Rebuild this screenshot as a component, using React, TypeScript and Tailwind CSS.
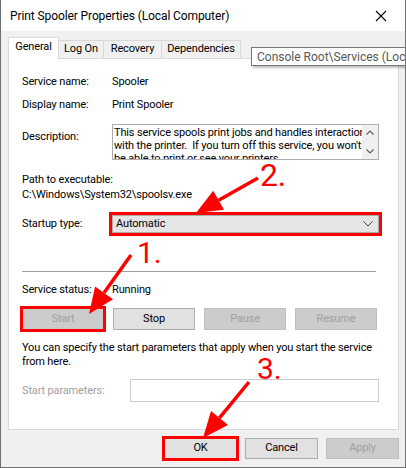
import React from "react";

type Pt = [number, number];

function arrowHead(tail: Pt, tip: Pt, len: number, half: number) {
  const dx = tip[0] - tail[0];
  const dy = tip[1] - tail[1];
  const d = Math.hypot(dx, dy);
  const ux = dx / d;
  const uy = dy / d;
  const bx = tip[0] - ux * len;
  const by = tip[1] - uy * len;
  const nx = -uy * half;
  const ny = ux * half;
  return {
    base: [bx, by] as Pt,
    points: `${tip[0]},${tip[1]} ${bx + nx},${by + ny} ${bx - nx},${by - ny}`,
  };
}

function Arrow({ tail, tip }: { tail: Pt; tip: Pt }) {
  const head = arrowHead(tail, tip, 26, 11);
  return (
    <g>
      <line
        x1={tail[0]}
        y1={tail[1]}
        x2={head.base[0]}
        y2={head.base[1]}
        stroke="#ff0000"
        strokeWidth={3.5}
      />
      <polygon points={head.points} fill="#ff0000" />
    </g>
  );
}

function WinButton({
  label,
  disabled,
  highlight,
  className = "",
}: {
  label: string;
  disabled?: boolean;
  highlight?: boolean;
  className?: string;
}) {
  return (
    <div
      className={`flex items-center justify-center border ${
        disabled
          ? "bg-[#cccccc] border-[#bfbfbf] text-[#a0a0a0]"
          : "bg-[#e1e1e1] border-[#adadad] text-black"
      } ${highlight ? "outline-[3px] outline-[#ff0000] outline-solid outline-offset-[-1px]" : ""} ${className}`}
    >
      {label}
    </div>
  );
}

export default function App() {
  return (
    <div className="relative w-[406px] h-[468px] overflow-hidden bg-[#f0f0f0] border-x border-b border-[#707070] font-['Roboto',sans-serif] text-[11px] tracking-[-0.15px] text-black">
      {/* Title bar */}
      <div className="flex items-center justify-between h-[31px] bg-white pl-[9px] pr-[18px]">
        <span className="text-[12px] tracking-[-0.1px] leading-none text-black">
          Print Spooler Properties (Local Computer)
        </span>
        <svg width="12" height="12" viewBox="0 0 12 12">
          <path d="M1 1L11 11M11 1L1 11" stroke="#000" strokeWidth="1.1" />
        </svg>
      </div>

      <div className="pl-[7px] pr-[6px] pt-[7px]">
        {/* Tabs */}
        <div className="flex items-end h-[20px]">
          <div className="relative z-10 -mb-px flex items-center justify-center w-[51px] h-[22px] bg-white border-x border-t border-[#d9d9d9] pb-[2px]">
            General
          </div>
          <div className="flex items-center justify-center w-[45px] h-[18px] border-t border-r border-[#d9d9d9]">
            Log On
          </div>
          <div className="flex items-center justify-center w-[58px] h-[18px] border-t border-r border-[#d9d9d9]">
            Recovery
          </div>
          <div className="flex items-center justify-center w-[79px] h-[18px] border-t border-r border-[#d9d9d9]">
            Dependencies
          </div>
        </div>

        {/* Panel */}
        <div className="h-[372px] bg-white border border-[#d9d9d9] pl-[13px] pr-[19px] pt-[15px] leading-[16px]">
          <div className="flex">
            <span className="w-[90px]">Service name:</span>
            <span>Spooler</span>
          </div>
          <div className="flex mt-[7px]">
            <span className="w-[90px]">Display name:</span>
            <span>Print Spooler</span>
          </div>
          <div className="flex mt-[11px]">
            <span className="w-[90px] pt-[5px]">Description:</span>
            <div className="flex w-[267px] h-[36px] border border-[#abadb3] overflow-hidden">
              <div className="flex-1 pl-[1px] pt-[1px] leading-[13px] overflow-hidden whitespace-nowrap">
                <div>This service spools print jobs and handles interaction</div>
                <div>with the printer.&nbsp; If you turn off this service, you won't</div>
                <div>be able to print or see your printers.</div>
              </div>
              <div className="flex flex-col items-center justify-between w-[16px] bg-[#f0f0f0] py-[5px]">
                <svg width="8" height="5" viewBox="0 0 8 5">
                  <path d="M0.5 4.5L4 1L7.5 4.5" stroke="#606060" strokeWidth="1.2" fill="none" />
                </svg>
                <svg width="8" height="5" viewBox="0 0 8 5">
                  <path d="M0.5 0.5L4 4L7.5 0.5" stroke="#606060" strokeWidth="1.2" fill="none" />
                </svg>
              </div>
            </div>
          </div>
          <div className="mt-[12px] leading-[15px]">
            <div>Path to executable:</div>
            <div>C:\Windows\System32\spoolsv.exe</div>
          </div>
          <div className="flex items-center mt-[13px]">
            <span className="w-[90px]">Startup type:</span>
            <div className="flex items-center justify-between w-[267px] h-[18px] bg-[#e5e5e5] border border-[#adadad] pl-[3px] pr-[5px] outline-[3px] outline-solid outline-[#ff0000]">
              <span>Automatic</span>
              <svg width="10" height="6" viewBox="0 0 10 6">
                <path d="M0.5 0.5L5 5L9.5 0.5" stroke="#404040" strokeWidth="1" fill="none" />
              </svg>
            </div>
          </div>
          <div className="mt-[38px] h-px w-[354px] bg-[#a0a0a0]" />
          <div className="flex mt-[10px]">
            <span className="w-[90px]">Service status:</span>
            <span>Running</span>
          </div>
          <div className="flex gap-[9px] mt-[10px]">
            <WinButton label="Start" disabled highlight className="w-[82px] h-[22px]" />
            <WinButton label="Stop" className="w-[82px] h-[22px]" />
            <WinButton label="Pause" disabled className="w-[82px] h-[22px]" />
            <WinButton label="Resume" disabled className="w-[82px] h-[22px]" />
          </div>
          <div className="mt-[11px] leading-[14px] whitespace-nowrap">
            <div>You can specify the start parameters that apply when you start the service</div>
            <div>from here.</div>
          </div>
          <div className="flex items-center mt-[10px]">
            <span className="w-[108px] text-[#a0a0a0]">Start parameters:</span>
            <div className="w-[249px] h-[23px] bg-white border border-[#cccccc]" />
          </div>
        </div>

        {/* Dialog buttons */}
        <div className="flex justify-end gap-[8px] mt-[8px]">
          <WinButton label="OK" highlight className="w-[73px] h-[21px]" />
          <WinButton label="Cancel" className="w-[73px] h-[21px]" />
          <WinButton label="Apply" disabled className="w-[73px] h-[21px]" />
        </div>
      </div>

      {/* Tooltip */}
      <div className="absolute left-[250px] top-[47px] h-[19px] pl-[5px] pr-[8px] flex items-center bg-white border border-[#767676] shadow-[2px_2px_2px_rgba(0,0,0,0.25)] text-[12px] tracking-normal text-[#575757] whitespace-nowrap">
        Console Root\Services (Local)
      </div>

      {/* Annotations */}
      <svg className="absolute inset-0 pointer-events-none" width="406" height="468">
        <Arrow tail={[257, 178]} tip={[195, 213]} />
        <Arrow tail={[130, 255]} tip={[88, 314]} />
        <Arrow tail={[248, 382]} tip={[202, 438]} />
        <text x="259" y="186" fill="#ff0000" fontSize="32" fontFamily="Roboto, sans-serif">2.</text>
        <text x="136" y="263" fill="#ff0000" fontSize="30" fontFamily="Roboto, sans-serif">1.</text>
        <text x="256" y="379" fill="#ff0000" fontSize="30" fontFamily="Roboto, sans-serif">3.</text>
      </svg>
    </div>
  );
}
